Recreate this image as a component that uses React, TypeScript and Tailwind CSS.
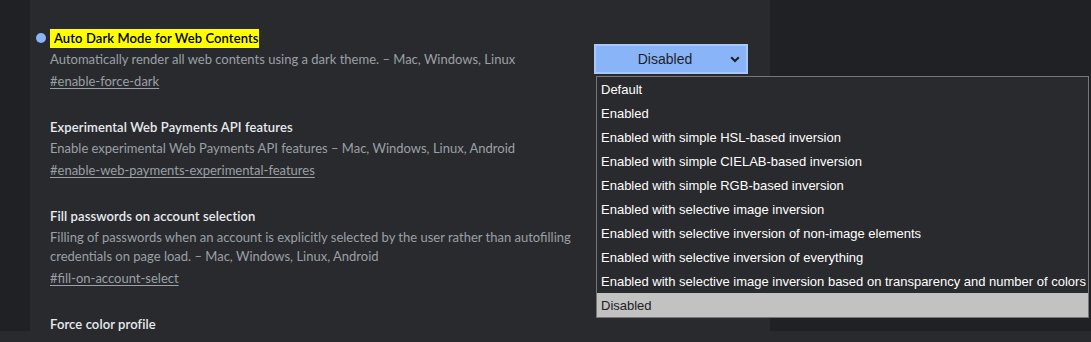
import React from "react";

const options = [
  "Default",
  "Enabled",
  "Enabled with simple HSL-based inversion",
  "Enabled with simple CIELAB-based inversion",
  "Enabled with simple RGB-based inversion",
  "Enabled with selective image inversion",
  "Enabled with selective inversion of non-image elements",
  "Enabled with selective inversion of everything",
  "Enabled with selective image inversion based on transparency and number of colors",
  "Disabled",
];

function Item({
  title,
  desc,
  link,
  highlight,
  children,
}: {
  title: string;
  desc: string;
  link?: string;
  highlight?: boolean;
  children?: React.ReactNode;
}) {
  return (
    <div className="flex justify-between mb-[26px]">
      <div className="w-[530px]">
        <div className="relative h-[20px] leading-[20px] font-semibold text-[#e8eaed] tracking-[0.1px]">
          {highlight && (
            <span className="absolute left-[-14px] top-[5px] w-[10px] h-[10px] rounded-full bg-[#8ab4f8]" />
          )}
          {highlight ? (
            <span className="bg-[#ffff00] text-black pl-[4px] inline-block h-[19px] leading-[19px]">{title}</span>
          ) : (
            title
          )}
        </div>
        <p className="mt-[2px] leading-[19px] text-[#9aa0a6]">{desc}</p>
        {link && (
          <a className="block mt-[3px] leading-[19px] text-[#9aa0a6] underline underline-offset-2">{link}</a>
        )}
      </div>
      {children}
    </div>
  );
}

export default function App() {
  return (
    <div
      className="relative w-[1091px] h-[342px] bg-[#202124] overflow-hidden text-[13px]"
      style={{ fontFamily: "Lato, 'Noto Sans', sans-serif" }}
    >
      <div className="flex h-[331px]">
        <div className="w-[30px] shrink-0" />
        <div className="w-[740px] shrink-0 bg-[#292a2d] pl-[20px] pr-[22px] pt-[28px]">
          <Item
            highlight
            title="Auto Dark Mode for Web Contents"
            desc="Automatically render all web contents using a dark theme. – Mac, Windows, Linux"
            link="#enable-force-dark"
          >
            <div
              className="mt-[16px] w-[154px] h-[30px] border-2 border-[#a8c7fa] bg-[#8ab4f8] flex items-center pl-[8px] pr-[6px] text-[#1f1f1f]"
              style={{ fontFamily: "'Liberation Sans', Arial, sans-serif" }}
            >
              <span className="flex-1 text-center text-[14px]">Disabled</span>
              <svg width="10" height="7" viewBox="0 0 10 7" className="ml-1">
                <path d="M1.2 1.2 L5 5 L8.8 1.2" fill="none" stroke="#1f1f1f" strokeWidth="2" />
              </svg>
            </div>
          </Item>
          <Item
            title="Experimental Web Payments API features"
            desc="Enable experimental Web Payments API features – Mac, Windows, Linux, Android"
            link="#enable-web-payments-experimental-features"
          />
          <Item
            title="Fill passwords on account selection"
            desc="Filling of passwords when an account is explicitly selected by the user rather than autofilling credentials on page load. – Mac, Windows, Linux, Android"
            link="#fill-on-account-select"
          />
          <Item title="Force color profile" desc="" />
        </div>
        <div className="flex-1" />
      </div>
      <div className="h-[11px] bg-[#292a2d]" />

      <div
        className="absolute left-[596px] top-[76px] w-[493px] border border-[#767676] bg-[#292a2d] text-[13px]"
        style={{ fontFamily: "'Liberation Sans', Arial, sans-serif" }}
      >
        {options.map((o) => (
          <div
            key={o}
            className={
              o === "Disabled"
                ? "h-[24px] leading-[24px] pt-[1px] pl-[4px] bg-[#c2c2c2] text-[#202124] whitespace-nowrap"
                : "h-[24px] leading-[24px] pt-[1px] pl-[4px] text-white whitespace-nowrap"
            }
          >
            {o}
          </div>
        ))}
      </div>
    </div>
  );
}
